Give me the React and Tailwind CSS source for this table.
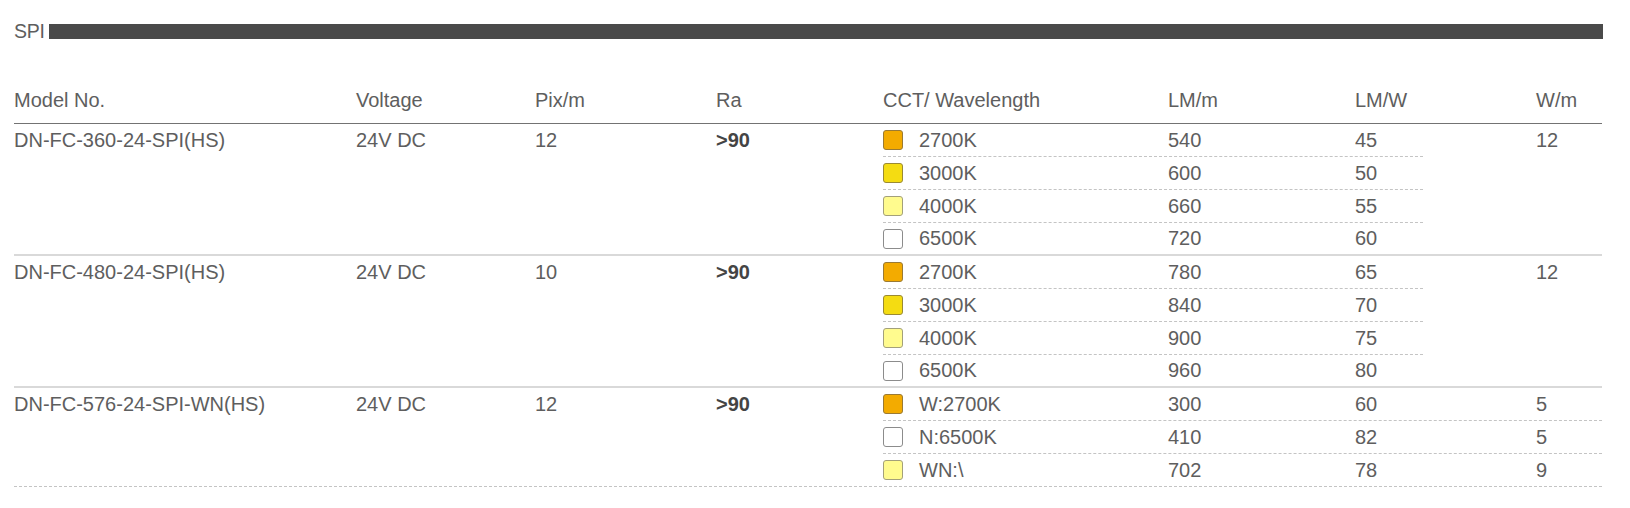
import React from "react";

const swatch = {
  amber: "bg-[#f3ab00] border-[#9a7a34]",
  yellow: "bg-[#f4dc12] border-[#9a8a34]",
  pale: "bg-[#fffb8e] border-[#a3a07a]",
  white: "bg-white border-[#8c8c8c]",
};

const groups = [
  {
    model: "DN-FC-360-24-SPI(HS)",
    voltage: "24V DC",
    pix: "12",
    ra: ">90",
    wm: "12",
    rows: [
      { color: "amber", cct: "2700K", lm: "540", lmw: "45" },
      { color: "yellow", cct: "3000K", lm: "600", lmw: "50" },
      { color: "pale", cct: "4000K", lm: "660", lmw: "55" },
      { color: "white", cct: "6500K", lm: "720", lmw: "60" },
    ],
  },
  {
    model: "DN-FC-480-24-SPI(HS)",
    voltage: "24V DC",
    pix: "10",
    ra: ">90",
    wm: "12",
    rows: [
      { color: "amber", cct: "2700K", lm: "780", lmw: "65" },
      { color: "yellow", cct: "3000K", lm: "840", lmw: "70" },
      { color: "pale", cct: "4000K", lm: "900", lmw: "75" },
      { color: "white", cct: "6500K", lm: "960", lmw: "80" },
    ],
  },
];

const lastGroup = {
  model: "DN-FC-576-24-SPI-WN(HS)",
  voltage: "24V DC",
  pix: "12",
  ra: ">90",
  rows: [
    { color: "amber", cct: "W:2700K", lm: "300", lmw: "60", wm: "5" },
    { color: "white", cct: "N:6500K", lm: "410", lmw: "82", wm: "5" },
    { color: "pale", cct: "WN:\\", lm: "702", lmw: "78", wm: "9" },
  ],
};

function Cct({ color, cct }) {
  return (
    <div className="w-[285px] flex items-center">
      <span className={`w-[20px] h-[20px] rounded-[3px] border ${swatch[color]}`} />
      <span className="ml-[16px]">{cct}</span>
    </div>
  );
}

function LeftCells({ g }) {
  return (
    <>
      <div className="w-[342px] h-[32px] flex items-center">{g.model}</div>
      <div className="w-[179px] h-[32px] flex items-center">{g.voltage}</div>
      <div className="w-[181px] h-[32px] flex items-center">{g.pix}</div>
      <div className="w-[167px] h-[32px] flex items-center font-bold text-[#444]">{g.ra}</div>
    </>
  );
}

export default function App() {
  return (
    <div className="w-[1630px] h-[508px] bg-white px-[14px] pt-[20px] text-[20px] leading-[23px] text-[#5e5e5e] font-['Liberation_Sans',Arial,sans-serif]">
      {/* titel */}
      <div className="flex items-center h-[23px] w-[1589px]">
        <span className="text-[19.5px] leading-[23px] tracking-[-0.3px]">SPI</span>
        <div className="ml-[4px] flex-1 h-[15px] bg-[#4a4a4a]" />
      </div>

      {/* kop */}
      <div className="mt-[46px] flex border-b border-[#737373] pb-[11px] w-[1588px]">
        <div className="w-[342px]">Model No.</div>
        <div className="w-[179px]">Voltage</div>
        <div className="w-[181px]">Pix/m</div>
        <div className="w-[167px]">Ra</div>
        <div className="w-[285px]">CCT/ Wavelength</div>
        <div className="w-[187px]">LM/m</div>
        <div className="w-[181px]">LM/W</div>
        <div className="w-[66px]">W/m</div>
      </div>

      {groups.map((g) => (
        <div key={g.model} className="flex w-[1588px] border-b-2 border-[#d9d9d9]">
          <LeftCells g={g} />
          <div className="w-[540px] flex flex-col">
            {g.rows.map((r, i) => (
              <div
                key={r.cct}
                className={`flex ${i < g.rows.length - 1 ? "h-[33px] border-b border-dashed border-[#c4c4c4]" : "h-[31px]"}`}
              >
                <Cct color={r.color} cct={r.cct} />
                <div className="w-[187px] flex items-center">{r.lm}</div>
                <div className="w-[68px] flex items-center">{r.lmw}</div>
              </div>
            ))}
          </div>
          <div className="w-[179px] pl-[113px] h-[32px] flex items-center">{g.wm}</div>
        </div>
      ))}

      <div className="flex w-[1588px] border-b border-dashed border-[#c4c4c4]">
        <LeftCells g={lastGroup} />
        <div className="w-[719px] flex flex-col">
          {lastGroup.rows.map((r, i) => (
            <div
              key={r.cct}
              className={`flex ${i < lastGroup.rows.length - 1 ? "h-[33px] border-b border-dashed border-[#c4c4c4]" : "h-[32px]"}`}
            >
              <Cct color={r.color} cct={r.cct} />
              <div className="w-[187px] flex items-center">{r.lm}</div>
              <div className="w-[181px] flex items-center">{r.lmw}</div>
              <div className="w-[66px] flex items-center">{r.wm}</div>
            </div>
          ))}
        </div>
      </div>
    </div>
  );
}
